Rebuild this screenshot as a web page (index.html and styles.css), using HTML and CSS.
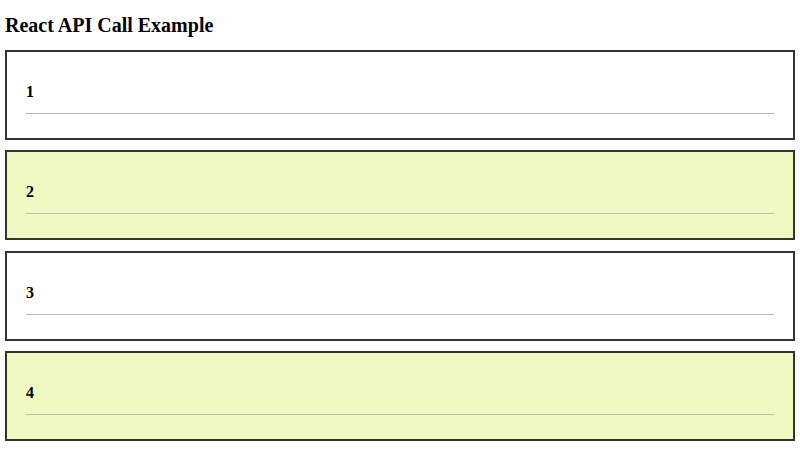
FILE: index.html
```html
<!DOCTYPE html>
<html lang="en">
<head>
  <meta charset="UTF-8" />
  <meta name="viewport" content="width=device-width, initial-scale=1.0"/>
  <title>React API Call Example</title>
  <link rel="stylesheet" href="styles.css">
</head>
<body>
  <div class="app">
    <h2>React API Call Example</h2>
    <div class="list">
      <div class="item">
        <div class="item-id">1</div>
        <hr />
      </div>
      <div class="item">
        <div class="item-id">2</div>
        <hr />
      </div>
      <div class="item">
        <div class="item-id">3</div>
        <hr />
      </div>
      <div class="item">
        <div class="item-id">4</div>
        <hr />
      </div>
    </div>
  </div>
</body>
</html>
```

FILE: styles.css
```css
body {
  font-family: "Liberation Serif", "Times New Roman", serif;
  margin: 0;
  color: #000;
  background: #fff;
}

.app {
  padding: 0 5px;
}

h2 {
  font-size: 20px;
  line-height: 23px;
  margin: 14px 0 13px;
}

.list {
  display: flex;
  flex-direction: column;
  gap: 10.3px;
}

.item {
  border: 2px solid #333;
  padding: 19px;
  background: #fff;
}

.item:nth-child(even) {
  background: #f1f9c3;
}

.item-id {
  font-weight: bold;
  font-size: 16px;
  line-height: 18px;
  margin-top: 12px;
}

.item hr {
  border: none;
  border-top: 1px solid #bbb;
  margin: 12px 0 5px;
}
```
